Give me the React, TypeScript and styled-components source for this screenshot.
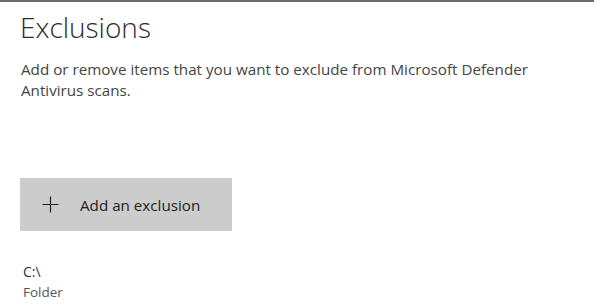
import React from "react";
import styled, { createGlobalStyle } from "styled-components";

const Global = createGlobalStyle`
  html, body { margin: 0; padding: 0; background: #ffffff; }
  body { font-family: "Open Sans", "Noto Sans", sans-serif; color: #333; }
`;

const Page = styled.div`
  width: 594px;
  height: 307px;
  box-sizing: border-box;
  border-top: 2px solid #6b6b6b;
  padding: 7px 20px 0 20px;
  display: flex;
  flex-direction: column;
  align-items: flex-start;
  overflow: hidden;
`;

const Title = styled.h1`
  margin: 0;
  font-weight: 300;
  font-size: 28px;
  line-height: 36px;
  color: #2b2b2b;
`;

const Description = styled.p`
  margin: 14px 0 0 1px;
  font-size: 15.2px;
  line-height: 21px;
  color: #444;
  width: 545px;
`;

const AddButton = styled.button`
  margin-top: 77px;
  width: 212px;
  height: 53px;
  border: none;
  background: #cccccc;
  display: flex;
  align-items: center;
  gap: 21px;
  padding: 0 0 0 22px;
  font-family: inherit;
  font-size: 15.2px;
  color: #222;
  cursor: pointer;
`;

const PlusIcon = styled.svg`
  width: 17px;
  height: 17px;
  flex: none;
`;

const Item = styled.div`
  margin-top: 31px;
  display: flex;
  flex-direction: column;
  padding-left: 3px;
`;

const ItemPath = styled.span`
  font-size: 14px;
  line-height: 20px;
  color: #333;
`;

const ItemType = styled.span`
  font-size: 13.5px;
  line-height: 20px;
  color: #555;
`;

export default function App() {
  return (
    <>
      <Global />
      <Page>
        <Title>Exclusions</Title>
        <Description>
          Add or remove items that you want to exclude from Microsoft Defender
          Antivirus scans.
        </Description>
        <AddButton>
          <PlusIcon viewBox="0 0 17 17">
            <path d="M8.5 0.5V16.5M0.5 8.5H16.5" stroke="#222" strokeWidth="1.2" fill="none" />
          </PlusIcon>
          Add an exclusion
        </AddButton>
        <Item>
          <ItemPath>C:\</ItemPath>
          <ItemType>Folder</ItemType>
        </Item>
      </Page>
    </>
  );
}
